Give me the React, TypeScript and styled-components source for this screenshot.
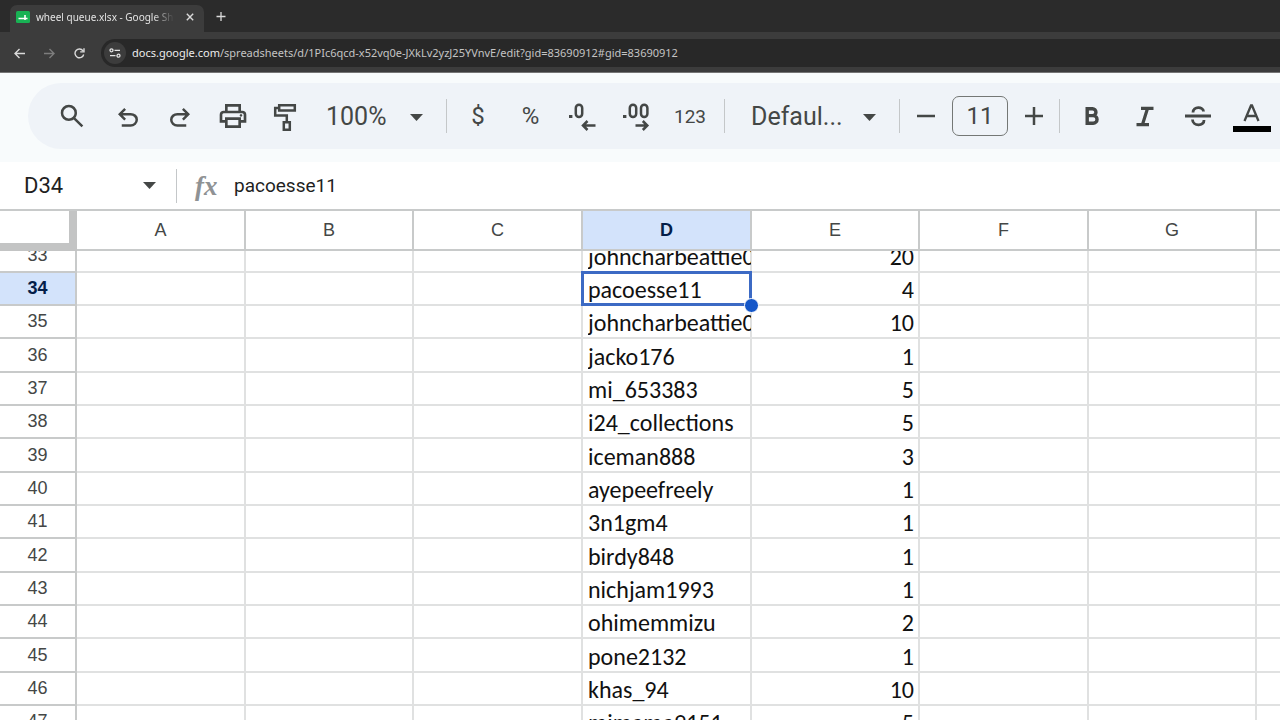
import React from "react";
import styled, { createGlobalStyle, css } from "styled-components";

const ui = `Roboto, "Liberation Sans", sans-serif`;
const chromeFont = `"Noto Sans", "Open Sans", sans-serif`;
const ink = "#444746";

const GlobalStyle = createGlobalStyle`
  *, *::before, *::after { box-sizing: border-box; }
  body { margin: 0; background: #fff; font-family: ${ui}; }
  button, input, select { font: inherit; color: inherit; border: 0; background: none; padding: 0; margin: 0; }
  svg { display: block; flex: none; }
`;

const Page = styled.div`
  height: 100vh;
  display: flex;
  flex-direction: column;
  overflow: hidden;
`;

/* Browser frame */
const TabStrip = styled.div`
  flex: none;
  display: flex;
  align-items: flex-end;
  height: 32px;
  padding-left: 10px;
  background: #2b2b2b;
  color: #e3e3e3;
  font-family: ${chromeFont};
`;

const Tab = styled.div`
  display: flex;
  align-items: center;
  width: 194px;
  height: 27px;
  padding: 0 8px 3px 6px;
  border-radius: 7px 7px 0 0;
  background: #3c3c3c;
`;

const TabTitle = styled.span`
  flex: 1;
  margin: 0 10px 0 6px;
  overflow: hidden;
  white-space: nowrap;
  font-size: 10px;
  line-height: 16px;
  mask-image: linear-gradient(to right, #000 85%, transparent);
`;

const ChromeButton = styled.button<{ $dim?: boolean; $w?: number }>`
  display: flex;
  align-items: center;
  justify-content: center;
  width: ${(p) => p.$w ?? 30}px;
  height: 24px;
  color: ${(p) => (p.$dim ? "#7d7d7d" : "#dadada")};
`;

const AddressRow = styled.div`
  flex: none;
  display: flex;
  align-items: center;
  height: 41px;
  padding: 2px 0 0 4px;
  background: #3c3c3c;
  border-bottom: 1px solid #757575;
  font-family: ${chromeFont};
`;

const AddressBar = styled.div`
  flex: 1;
  display: flex;
  align-items: center;
  gap: 6px;
  height: 28px;
  margin-left: 7px;
  padding-left: 3px;
  border-radius: 14px 0 0 14px;
  background: #282828;
`;

const SiteInfo = styled.button`
  display: flex;
  align-items: center;
  justify-content: center;
  width: 22px;
  height: 22px;
  border-radius: 50%;
  background: #3c3c3c;
  color: #e3e3e3;
`;

const Url = styled.a`
  color: #c4c4c4;
  font-size: 11px;
  line-height: 18px;
  text-decoration: none;
  white-space: nowrap;
  b { font-weight: 400; color: #ececec; }
`;

/* Spreadsheet toolbar */
const ToolbarBand = styled.div`
  flex: none;
  padding: 10px 0 13px 28px;
  background: #f8fbfc;
`;

const Toolbar = styled.div`
  display: flex;
  align-items: center;
  height: 66px;
  padding-left: 18px;
  border-radius: 33px 0 0 33px;
  background: #eff3f8;
  color: ${ink};
  overflow: hidden;
`;

const Tool = styled.button<{ $w?: number }>`
  flex: none;
  display: flex;
  align-items: center;
  justify-content: center;
  width: ${(p) => p.$w ?? 53}px;
  height: 48px;
  font-size: 24px;
`;

const SearchTool = styled(Tool)`
  margin-right: 4px;
`;

const FormatsTool = styled(Tool)`
  margin-right: 4px;
  font-size: 19px;
`;

const Divider = styled.span`
  flex: none;
  width: 1px;
  height: 34px;
  background: #c4c7c9;
`;

const Picker = styled.label<{ $w: number }>`
  flex: none;
  display: flex;
  align-items: center;
  justify-content: flex-end;
  gap: 20px;
  width: ${(p) => p.$w}px;
  padding: 2px 23px 0 0;
`;

const PickerSelect = styled.select<{ $w: number }>`
  appearance: none;
  width: ${(p) => p.$w}px;
  font-size: 25px;
  line-height: 32px;
  outline: 0;
`;

const SizeBox = styled.input`
  flex: none;
  width: 56px;
  height: 40px;
  border: 1px solid #747775;
  border-radius: 7px;
  text-align: center;
  font-size: 24px;
`;

/* Formula bar */
const FormulaBar = styled.div`
  flex: none;
  display: flex;
  align-items: center;
  height: 47px;
  padding-left: 24px;
  color: #1f1f1f;
`;

const NameBox = styled.input`
  width: 104px;
  height: 32px;
  font-size: 22px;
`;

const NameListButton = styled(ChromeButton)`
  margin-right: 5px;
`;

const Fx = styled.span`
  width: 57px;
  padding-left: 18px;
  color: #8f9294;
  font: italic 700 27px/32px "Liberation Serif", serif;
`;

const FormulaInput = styled.input`
  flex: 1;
  height: 32px;
  min-width: 0;
  font-size: 19px;
`;

/* Grid */
const SheetArea = styled.div`
  flex: 1;
  min-height: 0;
  overflow: hidden;
  border-top: 2px solid #c8caca;
`;

const Sheet = styled.table`
  width: 100%;
  table-layout: fixed;
  border-collapse: separate;
  border-spacing: 0;
`;

const Col = styled.col<{ $w?: number }>`
  width: ${(p) => (p.$w ? `${p.$w}px` : "auto")};
`;

const active = css`
  background: #d3e3fb;
  color: #041e49;
  font-weight: 700;
`;

const ColHead = styled.th<{ $active?: boolean }>`
  height: 40px;
  padding: 0;
  border: solid #c8caca;
  border-width: 0 2px 2px 0;
  color: ${ink};
  font: 400 18px/38px "Liberation Sans", sans-serif;
  ${(p) => p.$active && active}
  &:last-child { border-right: 0; }
`;

const Corner = styled.td`
  padding: 0;
  border: solid #c3c4c4;
  border-width: 0 8px 8px 0;
`;

const Row = styled.tr<{ $cut?: boolean }>`
  height: ${(p) => (p.$cut ? 22 : 33)}px;
  &:nth-child(3n + 4) { height: 34px; }
`;

const RowHead = styled.th<{ $active?: boolean }>`
  padding: 0;
  border: solid #c8caca;
  border-width: 0 2px 2px 0;
  color: ${ink};
  font: 400 18px/31px "Liberation Sans", sans-serif;
  ${(p) => p.$active && active}
`;

const Cell = styled.td<{ $right?: boolean }>`
  position: relative;
  padding: 0 4px 0 5px;
  border: solid #e0e1e1;
  border-width: 0 2px 2px 0;
  color: #111;
  font: 400 24px/31px Carlito, Lato, sans-serif;
  text-align: ${(p) => (p.$right ? "right" : "left")};
  &:last-child { border-right: 0; }
`;

const Clip = styled.div<{ $cut?: boolean; $bleed?: boolean; $low?: boolean }>`
  display: flex;
  flex-direction: column;
  justify-content: flex-end;
  height: ${(p) => (p.$cut ? 20 : 31)}px;
  padding-top: ${(p) => (p.$low && !p.$cut ? 2 : 0)}px;
  margin-right: ${(p) => (p.$bleed ? -5 : 0)}px;
  line-height: ${(p) => (p.$low ? 29 : 31)}px;
  overflow: hidden;
  white-space: nowrap;
`;

const Selection = styled.span`
  position: absolute;
  z-index: 1;
  inset: -2px;
  border: 3px solid #3c6ac4;
  pointer-events: none;
  &::after {
    content: "";
    position: absolute;
    right: -10px;
    bottom: -10px;
    width: 15px;
    height: 15px;
    border: 1px solid #fff;
    border-radius: 50%;
    background: #1456c8;
  }
`;

type IconProps = { d: string; size?: number };
const Symbol = ({ d, size = 30 }: IconProps) => (
  <svg width={size} height={size} viewBox="0 -960 960 960" fill="currentColor" aria-hidden="true">
    <path d={d} />
  </svg>
);

const paths = {
  search:
    "M784-120 532-372q-30 24-69 38t-83 14q-109 0-184.5-75.5T120-580q0-109 75.5-184.5T380-840q109 0 184.5 75.5T640-580q0 44-14 83t-38 69l252 252-56 56ZM380-400q75 0 127.5-52.5T560-580q0-75-52.5-127.5T380-760q-75 0-127.5 52.5T200-580q0 75 52.5 127.5T380-400Z",
  undo: "M280-140v-80h284q63 0 109.5-40T720-360q0-60-46.5-100T564-500H312l104 104-56 56-200-200 200-200 56 56-104 104h252q97 0 169.5 63T800-360q0 94-72.5 157T564-140H280Z",
  redo: "M396-140q-97 0-166.500-63T160-360q0-94 69.500-157T396-580h252L544-684l56-56 200 200-200 200-56-56 104-104H396q-63 0-109.5 40T240-360q0 60 46.5 100T396-220h284v80H396Z",
  print:
    "M640-640v-120H320v120h-80v-200h480v200h-80Zm80 180q17 0 28.5-11.5T760-500q0-17-11.5-28.5T720-540q-17 0-28.5 11.5T680-500q0 17 11.5 28.5T720-460Zm-80 260v-160H320v160h320Zm80 80H240v-160H80v-240q0-51 35-85.5t85-34.5h560q51 0 85.5 34.5T880-520v240H720v160Zm80-240v-160q0-17-11.5-28.5T760-560H200q-17 0-28.5 11.5T160-520v160h80v-80h480v80h80Z",
};

const Line = ({ d, w, h, sw = 2.5 }: { d: string; w: number; h: number; sw?: number }) => (
  <svg width={w} height={h} viewBox={`0 0 ${w} ${h}`} fill="none" stroke="currentColor" strokeWidth={sw} aria-hidden="true">
    <path d={d} />
  </svg>
);

const Caret = () => (
  <svg width="13" height="7" viewBox="0 0 13 7" fill={ink} aria-hidden="true">
    <path d="M0 0h13L6.500 7z" />
  </svg>
);

const Decimal = ({ more }: { more?: boolean }) => (
  <svg width="32" height="32" viewBox="0 0 32 32" fill="none" stroke="currentColor" strokeWidth="2.500" aria-hidden="true">
    <path d="M2 16.500h3.400" strokeWidth="3.200" />
    <rect x="8.800" y="4.800" width="6.400" height="12.200" rx="3.200" />
    {more && <rect x="20" y="4.800" width="6.400" height="12.200" rx="3.200" />}
    {more ? <path d="M14.500 25.500h11.500M21.800 21l4.500 4.500-4.500 4.500" /> : <path d="M28.500 25.500h-12M20.500 21l-4.500 4.500 4.500 4.500" />}
  </svg>
);

const columns = [
  { name: "A", width: 169 },
  { name: "B", width: 168 },
  { name: "C", width: 169 },
  { name: "D", width: 169 },
  { name: "E", width: 168 },
  { name: "F", width: 169 },
  { name: "G", width: 168 },
];

const rows: [number, string, number][] = [
  [33, "johncharbeattie0", 20],
  [34, "pacoesse11", 4],
  [35, "johncharbeattie0", 10],
  [36, "jacko176", 1],
  [37, "mi_653383", 5],
  [38, "i24_collections", 5],
  [39, "iceman888", 3],
  [40, "ayepeefreely", 1],
  [41, "3n1gm4", 1],
  [42, "birdy848", 1],
  [43, "nichjam1993", 1],
  [44, "ohimemmizu", 2],
  [45, "pone2132", 1],
  [46, "khas_94", 10],
  [47, "mimama9151", 5],
];

export default function App() {
  return (
    <Page>
      <GlobalStyle />
      <TabStrip>
        <Tab>
          <svg width="14" height="12" viewBox="0 0 14 12" aria-hidden="true">
            <rect width="14" height="12" rx="1.500" fill="#18b254" />
            <path d="M2.500 7.500h9M9 4v5" stroke="#fff" strokeWidth="1.600" />
          </svg>
          <TabTitle>wheel queue.xlsx - Google Sheets</TabTitle>
          <ChromeButton aria-label="Close tab" $w={12}>
            <Line w={8} h={8} sw={1.4} d="M.8.8l6.400 6.400M7.200.8L.8 7.200" />
          </ChromeButton>
        </Tab>
        <ChromeButton aria-label="New tab" $w={33}>
          <Line w={10} h={16} sw={1.3} d="M5 0v9M.5 4.500h9" />
        </ChromeButton>
      </TabStrip>
      <AddressRow>
        <ChromeButton aria-label="Back">
          <Line w={11} h={11} sw={1.4} d="M11 5.500H1M5.500 1L1 5.500 5.500 10" />
        </ChromeButton>
        <ChromeButton aria-label="Forward" $dim>
          <Line w={11} h={11} sw={1.4} d="M0 5.500h10M5.500 1L10 5.500 5.500 10" />
        </ChromeButton>
        <ChromeButton aria-label="Reload">
          <Line w={11} h={11} sw={1.4} d="M9.700 6.500A4.400 4.400 0 1 1 9 2.800M10 .3v3.600H6.200" />
        </ChromeButton>
        <AddressBar>
          <SiteInfo aria-label="View site information">
            <svg width="12" height="10" viewBox="0 0 12 10" fill="none" stroke="currentColor" strokeWidth="1.300" aria-hidden="true">
              <circle cx="2.500" cy="2.300" r="1.500" />
              <path d="M5.500 2.300H11M1 7.700h5.500" />
              <circle cx="9.500" cy="7.700" r="1.500" />
            </svg>
          </SiteInfo>
          <Url href="#gid=83690912">
            <b>docs.google.com</b>/spreadsheets/d/1PIc6qcd-x52vq0e-JXkLv2yzJ25YVnvE/edit?gid=83690912#gid=83690912
          </Url>
        </AddressBar>
      </AddressRow>
      <ToolbarBand>
        <Toolbar role="toolbar" aria-label="Formatting">
          <SearchTool aria-label="Search" $w={52}><Symbol d={paths.search} /></SearchTool>
          <Tool aria-label="Undo" $w={52}><Symbol d={paths.undo} /></Tool>
          <Tool aria-label="Redo" $w={52}><Symbol d={paths.redo} /></Tool>
          <Tool aria-label="Print"><Symbol d={paths.print} size={32} /></Tool>
          <Tool aria-label="Paint format" $w={51}>
            <Line w={24} h={32} d="M6.200 5.200h15.600v5.400H6.200zM6.200 7.900H2.200v7.500h11.600v6M10.800 22.200h6v7.600h-6z" />
          </Tool>
          <Picker $w={136}>
            <PickerSelect aria-label="Zoom" $w={64}><option>100%</option></PickerSelect>
            <Caret />
          </Picker>
          <Divider />
          <Tool aria-label="Format as currency" $w={62}>$</Tool>
          <Tool aria-label="Format as percent" $w={43}>%</Tool>
          <Tool aria-label="Decrease decimal places" $w={62}><Decimal /></Tool>
          <Tool aria-label="Increase decimal places" $w={46}><Decimal more /></Tool>
          <FormatsTool aria-label="More formats" $w={60}>123</FormatsTool>
          <Divider />
          <Picker $w={174}>
            <PickerSelect aria-label="Font" $w={92}><option>Defaul...</option></PickerSelect>
            <Caret />
          </Picker>
          <Divider />
          <Tool aria-label="Decrease font size" $w={52}><Line w={18} h={18} d="M0 9h18" /></Tool>
          <SizeBox aria-label="Font size" defaultValue="11" />
          <Tool aria-label="Increase font size" $w={51}><Line w={18} h={18} d="M0 9h18M9 0v18" /></Tool>
          <Divider />
          <Tool aria-label="Bold" $w={63}>
            <Line w={16} h={20} sw={3.4} d="M3.200 2.700h5.300a3.400 3.400 0 0 1 0 6.900H3.200zM3.200 9.600h6a3.800 3.800 0 0 1 0 7.700h-6z" />
          </Tool>
          <Tool aria-label="Italic" $w={44}>
            <Line w={18} h={22} sw={3.2} d="M5 3.300h12.500M.5 19.700H13M11.500 3.500L6.500 19.500" />
          </Tool>
          <Tool aria-label="Strikethrough" $w={62}>
            <Line w={26} h={22} sw={2.8} d="M0 11h26M8 7.500c0-6.500 10.500-6 10.500-1M7.500 14.500c0 7 12 7 11.500.5" />
          </Tool>
          <Tool aria-label="Text color" $w={45}>
            <svg width="38" height="32" viewBox="0 0 38 32" fill="none" stroke="currentColor" strokeWidth="2.300" aria-hidden="true">
              <path d="M11.500 21L18 5.500h1L25.500 21M13.500 16h10" />
              <path d="M0 29h38" stroke="#000" strokeWidth="6" />
            </svg>
          </Tool>
        </Toolbar>
      </ToolbarBand>
      <FormulaBar>
        <NameBox aria-label="Name box" defaultValue="D34" />
        <NameListButton aria-label="Open name list" $w={43}><Caret /></NameListButton>
        <Divider />
        <Fx>fx</Fx>
        <FormulaInput aria-label="Formula" defaultValue="pacoesse11" />
      </FormulaBar>
      <SheetArea>
        <Sheet>
          <colgroup>
            <Col $w={77} />
            {columns.map((c) => <Col key={c.name} $w={c.width} />)}
            <Col />
          </colgroup>
          <thead>
            <tr>
              <Corner />
              {columns.map((c) => (
                <ColHead key={c.name} scope="col" $active={c.name === "D"}>{c.name}</ColHead>
              ))}
              <ColHead as="td" />
            </tr>
          </thead>
          <tbody>
            {rows.map(([n, name, count], i) => (
              <Row key={n} $cut={i === 0}>
                <RowHead scope="row" $active={n === 34}><Clip $cut={i === 0}>{n}</Clip></RowHead>
                <Cell /><Cell /><Cell />
                <Cell>
                  <Clip $cut={i === 0} $bleed $low>{name}</Clip>
                  {n === 34 && <Selection />}
                </Cell>
                <Cell $right><Clip $cut={i === 0} $low>{count}</Clip></Cell>
                <Cell /><Cell /><Cell />
              </Row>
            ))}
          </tbody>
        </Sheet>
      </SheetArea>
    </Page>
  );
}
